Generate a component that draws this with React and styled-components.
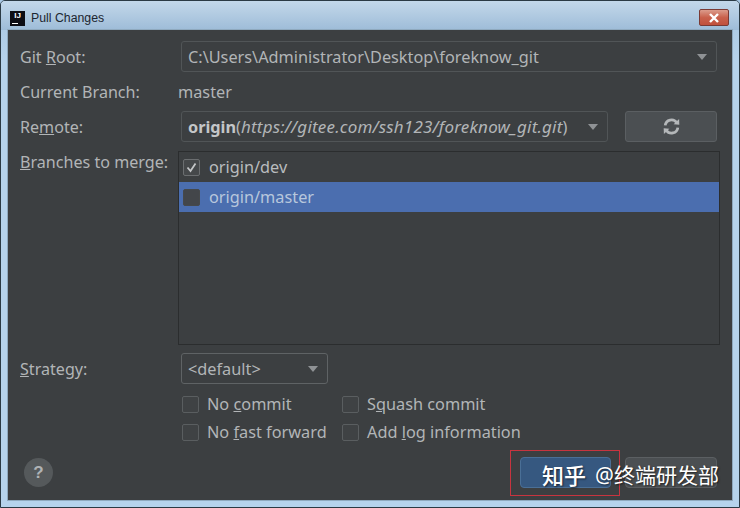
import React from 'react'
import styled, {createGlobalStyle} from 'styled-components'

const GlobalStyle = createGlobalStyle`
	html, body {
		margin: 0;
		padding: 0;
		background: #a9c8e4;
	}
`

const Page = styled.div`
	position: relative;
	width: 740px;
	height: 508px;
	overflow: hidden;
	display: flex;
	flex-direction: column;
	box-sizing: border-box;
	border: 1px solid #2b3a44;
	border-radius: 5px 5px 0 0;
	background: linear-gradient(#a8c5df, #b6d3ec 60px);
	font-family: "Noto Sans", "Noto Sans CJK SC", sans-serif;
	font-size: 16.3px;
	color: #b2b5b7;
`

const TitleBar = styled.div`
	height: 29px;
	box-sizing: border-box;
	flex: none;
	display: flex;
	align-items: center;
	padding: 5px 10px 0 9px;
	background: linear-gradient(#c3d8ea, #9ebcd8);
`

const AppIcon = styled.div`
	width: 15px;
	height: 15px;
	margin-right: 6px;
	background: #0d0d14;
	color: #fff;
	font: bold 8px/10px "Liberation Sans", sans-serif;
	text-align: center;
	position: relative;
	&:after {
		content: '';
		position: absolute;
		left: 2px;
		bottom: 2px;
		width: 6px;
		height: 1px;
		background: #fff;
	}
`

const TitleText = styled.span`
	flex: 1;
	font-family: "Liberation Sans", sans-serif;
	font-size: 12.3px;
	color: #1c2630;
`

const CloseButton = styled.div`
	box-sizing: border-box;
	width: 30px;
	height: 17px;
	margin-top: -1px;
	border: 1px solid #7a3a34;
	border-radius: 2px;
	display: flex;
	align-items: center;
	justify-content: center;
	background: linear-gradient(#dc9c8c, #c9614c 50%, #c0503c);
`

const Body = styled.div`
	flex: 1;
	margin: 0 7px 7px 7px;
	padding: 11px 12px 12px 12px;
	display: flex;
	flex-direction: column;
	background: #3c3f41;
	box-shadow: 0 0 0 1px #8fa9be;
`

const Row = styled.div`
	display: grid;
	grid-template-columns: 158px 1fr;
	align-items: ${p => p.$top ? 'start' : 'center'};
	min-height: 31px;
	margin-top: ${p => p.$gap || 0}px;
`

const Label = styled.div`
	font-size: 16.1px;
	line-height: 22px;
	white-space: nowrap;
`

const Combo = styled.div`
	box-sizing: border-box;
	height: 31px;
	width: ${p => p.$width ? `${p.$width}px` : 'auto'};
	margin: 0 3px;
	padding: 0 9px 0 6px;
	display: flex;
	align-items: center;
	justify-content: space-between;
	border: 1px solid ${p => p.$bright ? '#5f6365' : '#515557'};
	border-radius: 3px;
	background: #3c3f41;
	white-space: nowrap;
`

const RemoteRow = styled.div`
	display: flex;
	gap: 14px;
`

const Arrow = styled.span`
	width: 0;
	height: 0;
	flex: none;
	border-left: 5.5px solid transparent;
	border-right: 5.5px solid transparent;
	border-top: 6px solid #8f9295;
`

const Bold = styled.b`
	font-weight: 700;
	color: #c4c6c8;
`

const Italic = styled.i`
	font-size: 17px;
	letter-spacing: 0.2px;
`

const SideButton = styled.div`
	box-sizing: border-box;
	width: 92px;
	height: 31px;
	display: flex;
	align-items: center;
	justify-content: center;
	border: 1px solid #5b5f62;
	border-radius: 3px;
	background: #4b4f52;
`

const List = styled.div`
	height: 194px;
	box-sizing: border-box;
	border: 1px solid #2b2d2e;
	background: #3c3f41;
`

const ListRow = styled.div`
	height: 30px;
	display: flex;
	align-items: center;
	gap: 9px;
	padding-left: 4px;
	background: ${p => p.$selected ? '#4b6eaf' : 'transparent'};
	color: ${p => p.$selected ? '#b8c7dc' : '#b9bcbe'};
`

const Box = styled.span`
	box-sizing: border-box;
	width: 17px;
	height: 17px;
	flex: none;
	display: flex;
	align-items: center;
	justify-content: center;
	border: 1px solid ${p => p.$filled ? '#46494b' : p.$checked ? '#6b6e70' : '#5a5e60'};
	border-radius: 2px;
	background: ${p => p.$filled ? '#43464a' : p.$checked ? '#45484a' : '#3f4244'};
`

const Options = styled.div`
	display: grid;
	grid-template-columns: 160px auto;
	justify-content: start;
	row-gap: 6px;
	margin: 9px 0 0 162px;
`

const Option = styled.div`
	display: flex;
	align-items: center;
	gap: 8px;
	height: 22px;
	white-space: nowrap;
`

const Footer = styled.div`
	margin-top: auto;
	display: flex;
	align-items: center;
	justify-content: space-between;
	padding-left: 4px;
`

const Help = styled.div`
	width: 29px;
	height: 29px;
	border-radius: 50%;
	background: #55595b;
	color: #b0b3b5;
	display: flex;
	align-items: center;
	justify-content: center;
	font: bold 17px "Liberation Sans", sans-serif;
`

const Buttons = styled.div`
	display: flex;
	gap: 14px;
	padding-right: 3px;
`

const FooterButton = styled.div`
	box-sizing: border-box;
	width: ${p => p.$width}px;
	height: 31px;
	border: 1px solid ${p => p.$primary ? '#4a6f96' : '#5b5f62'};
	border-radius: 4px;
	background: ${p => p.$primary ? '#365880' : '#4b4f52'};
`

const Marker = styled.div`
	position: absolute;
	left: 509px;
	top: 449px;
	width: 110px;
	height: 46px;
	box-sizing: border-box;
	border: 1px solid #c8343f;
`

const Watermark = styled.div`
	position: absolute;
	left: 541px;
	top: 459px;
	display: flex;
	align-items: center;
	gap: 9px;
	color: #fff;
	font-size: 21px;
	line-height: 30px;
	white-space: nowrap;
	text-shadow: 1px 1px 2px rgba(0, 0, 0, 0.6);
`

const WatermarkLogo = styled.b`
	font-size: 22px;
	font-weight: 500;
`

const RefreshIcon = () => (
	<svg width='19' height='19' viewBox='0 0 18 18' fill='none'>
		<path d='M3 8 A6 6 0 0 1 14 5.5' stroke='#b4b7b9' strokeWidth='2.6'/>
		<path d='M11 6.8 L16.4 7.4 L16.2 1.8 Z' fill='#b4b7b9'/>
		<path d='M15 10 A6 6 0 0 1 4 12.5' stroke='#b4b7b9' strokeWidth='2.6'/>
		<path d='M7 11.2 L1.6 10.6 L1.8 16.2 Z' fill='#b4b7b9'/>
	</svg>
)

const CheckMark = () => (
	<svg width='13' height='13' viewBox='0 0 13 13' fill='none'>
		<path d='M2.5 6.5 L5.5 10 L10.5 2.5' stroke='#c4c6c8' strokeWidth='1.8'/>
	</svg>
)

const CloseMark = () => (
	<svg width='12' height='10' viewBox='0 0 12 10' fill='none'>
		<path d='M2 1 L10 9 M10 1 L2 9' stroke='#fff' strokeWidth='2.4'/>
	</svg>
)

const CheckOption = ({children}) => (
	<Option>
		<Box/>
		<span>{children}</span>
	</Option>
)

const App = () => (
	<Page>
		<GlobalStyle/>
		<TitleBar>
			<AppIcon>IJ</AppIcon>
			<TitleText>Pull Changes</TitleText>
			<CloseButton><CloseMark/></CloseButton>
		</TitleBar>
		<Body>
			<Row>
				<Label>Git <u>R</u>oot:</Label>
				<Combo>C:\Users\Administrator\Desktop\foreknow_git<Arrow/></Combo>
			</Row>
			<Row $gap={4}>
				<Label>Current Branch:</Label>
				<span>master</span>
			</Row>
			<Row $gap={4}>
				<Label>Re<u>m</u>ote:</Label>
				<RemoteRow>
					<Combo $width={427}>
						<span><Bold>origin</Bold>(<Italic>https://gitee.com/ssh123/foreknow_git.git</Italic>)</span>
						<Arrow/>
					</Combo>
					<SideButton><RefreshIcon/></SideButton>
				</RemoteRow>
			</Row>
			<Row $top $gap={9}>
				<Label><u>B</u>ranches to merge:</Label>
				<List>
					<ListRow><Box $checked><CheckMark/></Box>origin/dev</ListRow>
					<ListRow $selected><Box $filled/>origin/master</ListRow>
				</List>
			</Row>
			<Row $gap={8}>
				<Label><u>S</u>trategy:</Label>
				<Combo $bright $width={147}>&lt;default&gt;<Arrow/></Combo>
			</Row>
			<Options>
				<CheckOption>No <u>c</u>ommit</CheckOption>
				<CheckOption>S<u>q</u>uash commit</CheckOption>
				<CheckOption>No <u>f</u>ast forward</CheckOption>
				<CheckOption>Add <u>l</u>og information</CheckOption>
			</Options>
			<Footer>
				<Help>?</Help>
				<Buttons>
					<FooterButton $primary $width={91}/>
					<FooterButton $width={92}/>
				</Buttons>
			</Footer>
		</Body>
		<Marker/>
		<Watermark><WatermarkLogo>知乎</WatermarkLogo><span>@终端研发部</span></Watermark>
	</Page>
)

export default App
